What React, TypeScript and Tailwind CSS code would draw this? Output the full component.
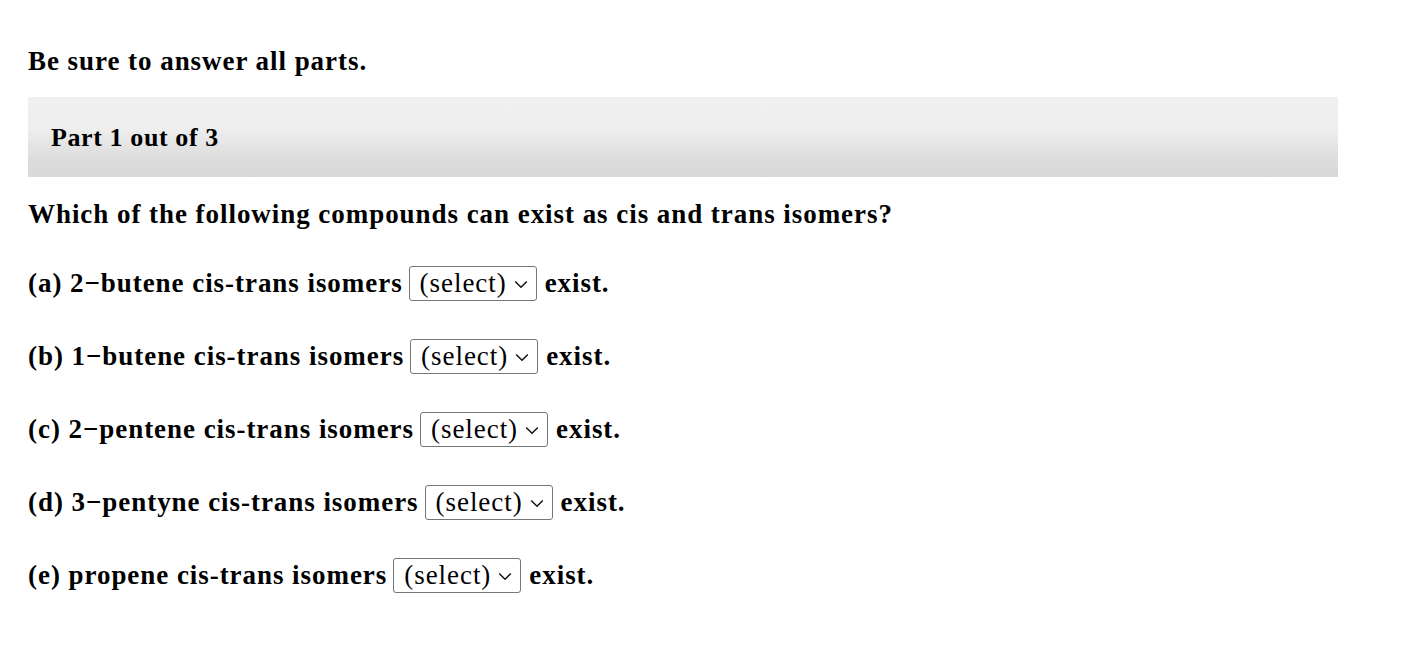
import React from 'react'

const rows = [
  { label: '(a) 2\u2212butene cis-trans isomers' },
  { label: '(b) 1\u2212butene cis-trans isomers' },
  { label: '(c) 2\u2212pentene cis-trans isomers' },
  { label: '(d) 3\u2212pentyne cis-trans isomers' },
  { label: '(e) propene cis-trans isomers' },
]

function SelectBox() {
  return (
    <span className="ml-[6px] mr-[8px] inline-flex h-[35px] items-center rounded-[3px] border border-[#767676] bg-white pl-[10px] pr-[8px] font-normal">
      <span>(select)</span>
      <svg className="ml-[7px] mt-[2px] shrink-0" width="14" height="9" viewBox="0 0 14 9" fill="none">
        <path d="M1.2 1.5 L7 7.2 L12.8 1.5" stroke="#111" strokeWidth="1.5" />
      </svg>
    </span>
  )
}

export default function App() {
  return (
    <div className="min-h-[650px] bg-white px-[28px] pt-[44px] font-['Liberation_Serif',serif] text-[27px] tracking-[0.95px] text-black">
      <div className="font-bold leading-[34px]">Be sure to answer all parts.</div>
      <div className="mt-[19px] flex h-[80px] w-[1310px] items-center bg-[linear-gradient(to_bottom,#f0f0f0_0%,#eeeeee_40%,#dcdcdc_78%,#d9d9d9_100%)] pl-[23px]">
        <span className="text-[26px] font-bold tracking-[0.6px]">Part 1 out of 3</span>
      </div>
      <div className="mt-[20px] font-bold leading-[34px]">
        Which of the following compounds can exist as cis and trans isomers?
      </div>
      <div className="mt-[35px] flex flex-col gap-[38px]">
        {rows.map((r) => (
          <div key={r.label} className="flex h-[35px] items-center font-bold">
            <span>{r.label}</span>
            <SelectBox />
            <span>exist.</span>
          </div>
        ))}
      </div>
    </div>
  )
}
